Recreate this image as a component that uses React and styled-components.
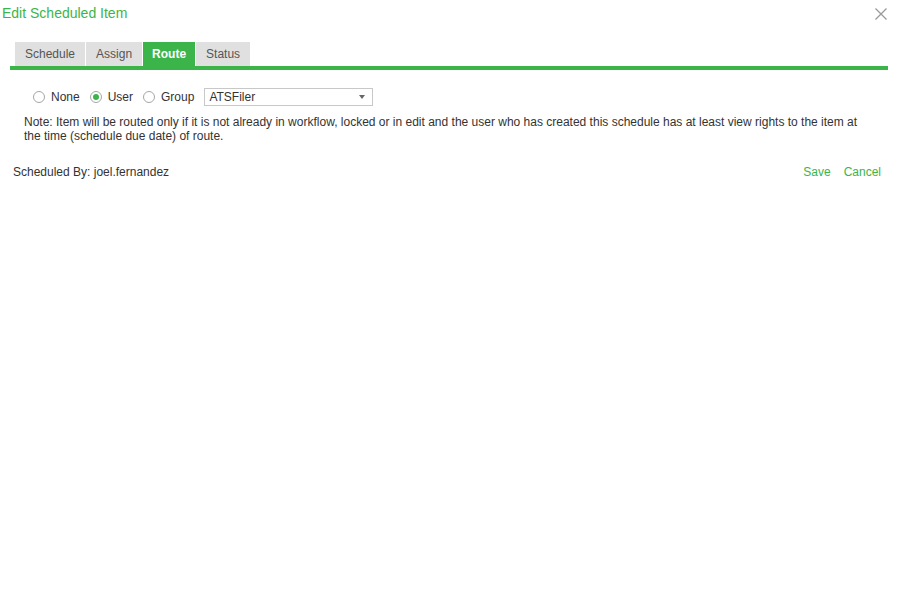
import styled, { createGlobalStyle } from "styled-components";
import { useState } from "react";

const Global = createGlobalStyle`
  body {
    margin: 0;
    background: #fff;
    font-family: "Liberation Sans", Arial, sans-serif;
    color: #333;
  }
`;

const green = "#3bb54a";

const Dialog = styled.div`
  width: 898px;
  height: 593px;
  box-sizing: border-box;
`;

const Header = styled.div`
  display: flex;
  align-items: center;
  justify-content: space-between;
  height: 25px;
  padding: 0 10px 0 2px;
`;

const Title = styled.h1`
  margin: 0;
  font-size: 14px;
  font-weight: normal;
  color: ${green};
`;

const Close = styled.button`
  border: 0;
  background: none;
  padding: 0;
  width: 14px;
  height: 14px;
  cursor: pointer;
  display: flex;
  margin-top: 3px;
`;

const TabBar = styled.div`
  display: flex;
  gap: 1px;
  margin: 17px 10px 0 10px;
  padding-left: 5px;
  border-bottom: 4px solid ${green};
`;

const Tab = styled.div`
  height: 24px;
  line-height: 24px;
  padding: 0 ${(p) => (p.$active ? "9px" : "10px")};
  font-size: 12px;
  background: ${(p) => (p.$active ? green : "#e0e0e0")};
  color: ${(p) => (p.$active ? "#fff" : "#555")};
  font-weight: ${(p) => (p.$active ? "bold" : "normal")};
  cursor: pointer;
`;

const Body = styled.div`
  padding: 18px 24px 0 24px;
`;

const RadioRow = styled.div`
  display: flex;
  align-items: center;
  height: 18px;
  padding-left: 9px;
`;

const RadioLabel = styled.label`
  display: flex;
  align-items: center;
  gap: 6px;
  font-size: 12px;
  color: #333;
  margin-right: 10px;
  cursor: pointer;
`;

const Circle = styled.span`
  width: 12px;
  height: 12px;
  box-sizing: border-box;
  border-radius: 50%;
  border: 1px solid #a6a6a6;
  background: #fff;
  display: flex;
  align-items: center;
  justify-content: center;
  &::after {
    content: "";
    width: 6px;
    height: 6px;
    border-radius: 50%;
    background: ${(p) => (p.$checked ? green : "transparent")};
  }
`;

const Select = styled.div`
  width: 169px;
  height: 18px;
  box-sizing: border-box;
  border: 1px solid #c8c8c8;
  display: flex;
  align-items: center;
  justify-content: space-between;
  padding: 0 7px 0 4px;
  font-size: 12px;
  color: #333;
`;

const Caret = styled.span`
  width: 0;
  height: 0;
  border-left: 3.5px solid transparent;
  border-right: 3.5px solid transparent;
  border-top: 4px solid #666;
`;

const Note = styled.p`
  margin: 9px 0 0 0;
  font-size: 12px;
  line-height: 14px;
  color: #333;
  width: 850px;
`;

const Footer = styled.div`
  display: flex;
  justify-content: space-between;
  align-items: center;
  padding: 0 17px 0 13px;
  margin-top: 22px;
  font-size: 12px;
`;

const Actions = styled.div`
  display: flex;
  gap: 13px;
`;

const Link = styled.a`
  color: ${green};
  cursor: pointer;
  text-decoration: none;
`;

const tabs = ["Schedule", "Assign", "Route", "Status"];
const options = ["None", "User", "Group"];

export default function App() {
  const [route, setRoute] = useState("User");
  return (
    <Dialog>
      <Global />
      <Header>
        <Title>Edit Scheduled Item</Title>
        <Close aria-label="Close">
          <svg width="14" height="14" viewBox="0 0 14 14">
            <path d="M1.5 1.5 L12.5 12.5 M12.5 1.5 L1.5 12.5" stroke="#999" strokeWidth="1.3" />
          </svg>
        </Close>
      </Header>
      <TabBar>
        {tabs.map((t) => (
          <Tab key={t} $active={t === "Route"}>
            {t}
          </Tab>
        ))}
      </TabBar>
      <Body>
        <RadioRow>
          {options.map((o) => (
            <RadioLabel key={o} onClick={() => setRoute(o)}>
              <Circle $checked={route === o} />
              {o}
            </RadioLabel>
          ))}
          <Select>
            ATSFiler
            <Caret />
          </Select>
        </RadioRow>
        <Note>
          Note: Item will be routed only if it is not already in workflow, locked or in edit and the user who has
          created this schedule has at least view rights to the item at the time (schedule due date) of route.
        </Note>
      </Body>
      <Footer>
        <span>Scheduled By: joel.fernandez</span>
        <Actions>
          <Link>Save</Link>
          <Link>Cancel</Link>
        </Actions>
      </Footer>
    </Dialog>
  );
}
